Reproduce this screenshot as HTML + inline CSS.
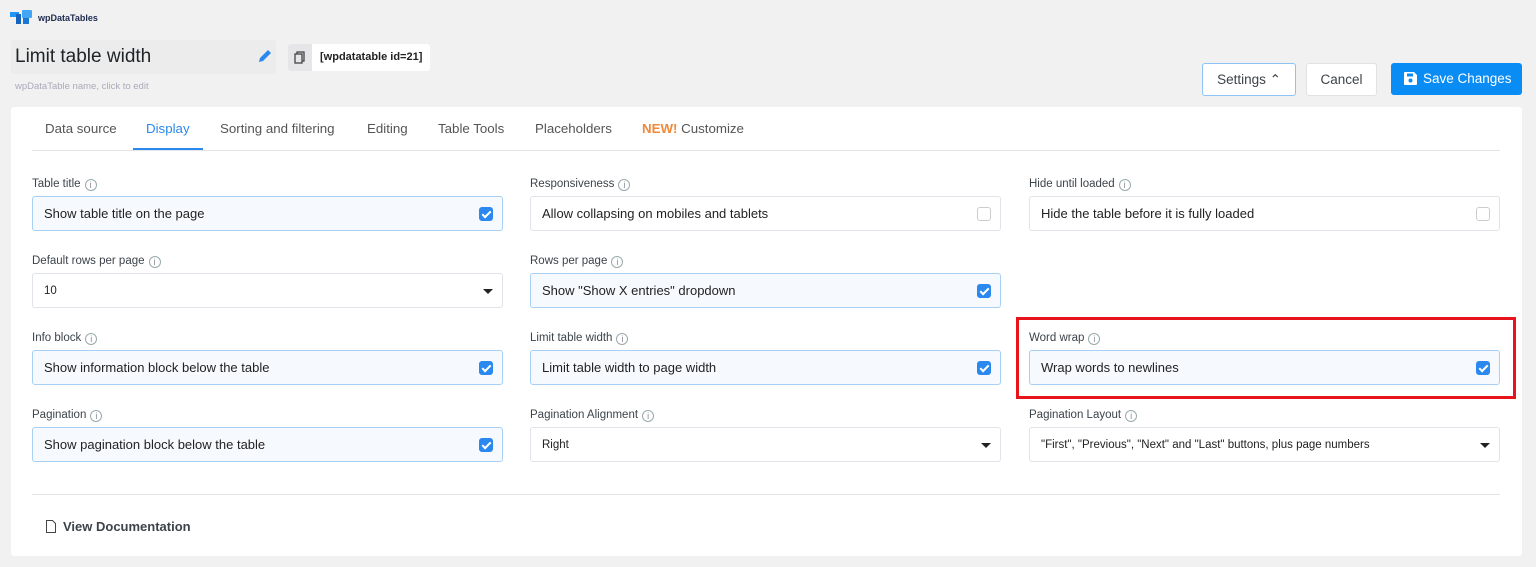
<!DOCTYPE html>
<html><head><style>
*{box-sizing:border-box;margin:0;padding:0}
body{width:1536px;height:567px;background:#f1f1f1;font-family:"Liberation Sans",sans-serif;position:relative;overflow:hidden;color:#333}
.abs{position:absolute}
.lbl{position:absolute;font-size:11.5px;color:#3c434a}
.lbl i{display:inline-block;width:12px;height:12px;border:1px solid #9aa;border-radius:50%;font-size:9px;font-style:normal;text-align:center;line-height:10px;color:#889;margin-left:4px;vertical-align:-1px}
.box{position:absolute;width:471px;height:35px;border:1px solid #e0e3e7;border-radius:3px;background:#fff;font-size:13px;padding-left:11px;line-height:33px;color:#222}
.box.on{background:#f6faff;border-color:#a8d0f5}
.cb{position:absolute;right:9px;top:10px;width:14px;height:14px;border-radius:3px;border:1px solid #ccc;background:#fff}
.on .cb{background:#2a88ee;border-color:#2a88ee}
.on .cb:after{content:"";position:absolute;left:4px;top:1px;width:3px;height:7px;border:solid #fff;border-width:0 2px 2px 0;transform:rotate(45deg)}
.sel{font-size:11.5px;line-height:35px}
.sel:after{content:"";position:absolute;right:9px;top:15px;border:5px solid transparent;border-top:5px solid #222;border-bottom:0}
.tab{position:absolute;top:121px;font-size:13.3px;color:#555}
</style></head><body>
<svg class="abs" style="left:10px;top:10px" width="22" height="16"><rect x="0" y="2" width="9" height="5" fill="#2196f3"/><rect x="6" y="4" width="5" height="10" fill="#1565c0"/><rect x="12" y="0" width="10" height="8" rx="1" fill="#42a5f5"/><rect x="13" y="8" width="6" height="6" fill="#1976d2"/></svg>
<div class="abs" style="left:38px;top:13px;font-size:9px;font-weight:bold;color:#1d2b4f">wpDataTables</div>
<div class="abs" style="left:11px;top:40px;width:265px;height:34px;background:#ececec;border-radius:3px"></div>
<div class="abs" style="left:15px;top:46px;font-size:19px;color:#1d2327">Limit table width</div>
<svg class="abs" style="left:258px;top:49px" width="14" height="14" viewBox="0 0 14 14"><path d="M1 13l1-4 8-8 3 3-8 8z" fill="#2a88ee"/></svg>
<div class="abs" style="left:288px;top:44px;width:24px;height:27px;background:#e6e6e8;border-radius:3px 0 0 3px"></div>
<svg class="abs" style="left:294px;top:51px" width="12" height="13"><rect x="3" y="1" width="7" height="9" fill="none" stroke="#444" stroke-width="1.3"/><rect x="1" y="3" width="7" height="9" fill="#e6e6e8" stroke="#444" stroke-width="1.3"/></svg>
<div class="abs" style="left:312px;top:44px;width:118px;height:27px;background:#fff;border-radius:0 3px 3px 0;font-size:11px;font-weight:bold;line-height:27px;padding-left:8px;color:#222">[wpdatatable id=21]</div>
<div class="abs" style="left:15px;top:81px;font-size:9.5px;color:#aab">wpDataTable name, click to edit</div>
<div class="abs" style="left:1202px;top:63px;width:94px;height:33px;border:1px solid #8cc4f5;border-radius:3px;background:#fff;font-size:13.5px;line-height:31px;text-align:center;color:#3c434a">Settings &#8963;</div>
<div class="abs" style="left:1306px;top:63px;width:71px;height:33px;border:1px solid #e2e2e2;border-radius:3px;background:#fff;font-size:13.5px;line-height:31px;text-align:center;color:#3c434a">Cancel</div>
<div class="abs" style="left:1391px;top:63px;width:131px;height:32px;border-radius:3px;background:#0a8cf5;font-size:13.5px;line-height:32px;color:#fff;padding-left:32px">Save Changes</div>
<svg class="abs" style="left:1404px;top:72px" width="13" height="13"><path d="M0 1a1 1 0 011-1h9l3 3v9a1 1 0 01-1 1H1a1 1 0 01-1-1z" fill="#fff"/><rect x="3" y="1.5" width="6" height="3" fill="#0a8cf5"/><circle cx="6.5" cy="8.5" r="2" fill="#0a8cf5"/></svg>
<div class="abs" style="left:11px;top:107px;width:1511px;height:449px;background:#fff;border-radius:3px"></div>
<div class="tab" style="left:45px">Data source</div>
<div class="tab" style="left:146px;color:#2a88ee">Display</div>
<div class="abs" style="left:133px;top:148px;width:70px;height:2px;background:#2a88ee"></div>
<div class="tab" style="left:220px">Sorting and filtering</div>
<div class="tab" style="left:367px">Editing</div>
<div class="tab" style="left:438px">Table Tools</div>
<div class="tab" style="left:535px">Placeholders</div>
<div class="tab" style="left:642px"><b style="color:#f08a3a;font-weight:bold">NEW!</b> Customize</div>
<div class="abs" style="left:32px;top:150px;width:1468px;height:1px;background:#e2e4e7"></div>

<div class="lbl" style="left:32px;top:178px">Table title<i>i</i></div>
<div class="box on" style="left:32px;top:196px">Show table title on the page<span class="cb"></span></div>
<div class="lbl" style="left:530px;top:178px">Responsiveness<i>i</i></div>
<div class="box" style="left:530px;top:196px">Allow collapsing on mobiles and tablets<span class="cb"></span></div>
<div class="lbl" style="left:1029px;top:178px">Hide until loaded<i>i</i></div>
<div class="box" style="left:1029px;top:196px">Hide the table before it is fully loaded<span class="cb"></span></div>

<div class="lbl" style="left:32px;top:255px">Default rows per page<i>i</i></div>
<div class="box sel" style="left:32px;top:273px">10</div>
<div class="lbl" style="left:530px;top:255px">Rows per page<i>i</i></div>
<div class="box on" style="left:530px;top:273px">Show "Show X entries" dropdown<span class="cb"></span></div>

<div class="lbl" style="left:32px;top:332px">Info block<i>i</i></div>
<div class="box on" style="left:32px;top:350px">Show information block below the table<span class="cb"></span></div>
<div class="lbl" style="left:530px;top:332px">Limit table width<i>i</i></div>
<div class="box on" style="left:530px;top:350px">Limit table width to page width<span class="cb"></span></div>
<div class="lbl" style="left:1029px;top:332px">Word wrap<i>i</i></div>
<div class="box on" style="left:1029px;top:350px">Wrap words to newlines<span class="cb"></span></div>
<div class="abs" style="left:1016px;top:317px;width:500px;height:82px;border:3px solid #e8141c"></div>

<div class="lbl" style="left:32px;top:409px">Pagination<i>i</i></div>
<div class="box on" style="left:32px;top:427px">Show pagination block below the table<span class="cb"></span></div>
<div class="lbl" style="left:530px;top:409px">Pagination Alignment<i>i</i></div>
<div class="box sel" style="left:530px;top:427px">Right</div>
<div class="lbl" style="left:1029px;top:409px">Pagination Layout<i>i</i></div>
<div class="box sel" style="left:1029px;top:427px">"First", "Previous", "Next" and "Last" buttons, plus page numbers</div>

<div class="abs" style="left:32px;top:494px;width:1468px;height:1px;background:#e2e4e7"></div>
<svg class="abs" style="left:46px;top:520px" width="10" height="13"><path d="M0.5 0.5h6l3 3v9h-9z" fill="none" stroke="#444"/></svg>
<div class="abs" style="left:63px;top:519px;font-size:13px;color:#3c434a;font-weight:bold">View Documentation</div>
</body></html>
